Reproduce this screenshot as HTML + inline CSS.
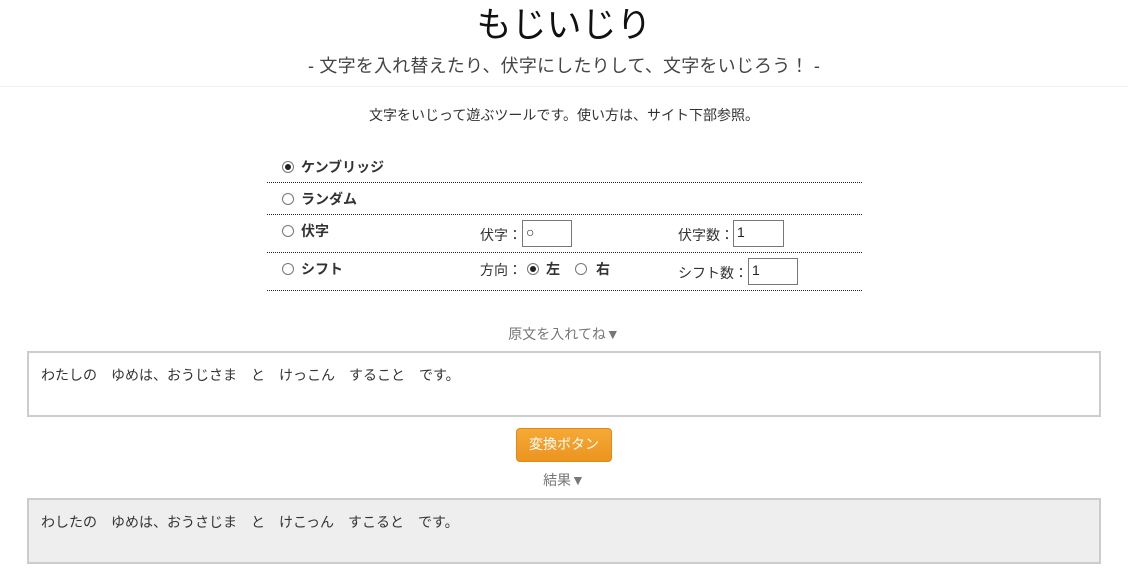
<!DOCTYPE html>
<html><head><meta charset="utf-8">
<style>
*{margin:0;padding:0;box-sizing:border-box}
body{width:1128px;height:575px;background:#fff;font-family:"Liberation Sans","Noto Sans CJK JP",sans-serif;color:#333;position:relative;overflow:hidden;font-size:13px}
.a{position:absolute;white-space:nowrap}
.c{left:0;width:1128px;text-align:center}
.r{position:absolute;width:12px;height:12px;border:1px solid #777;border-radius:50%;background:#fff}
.r.on::after{content:"";position:absolute;left:2px;top:2px;width:6px;height:6px;border-radius:50%;background:#222}
.hl{position:absolute;left:267px;width:595px;border-top:1px dotted #222;height:0}
.b{font-weight:bold;font-size:14px}
.in{position:absolute;border:1px solid #777;height:27px;background:#fff;font-size:14px;padding:3px 0 0 3px;color:#222}
.box{position:absolute;left:27px;width:1074px;height:66px;border:2px solid #ccc;padding:12px 12px;font-size:14px;color:#333}
</style></head><body>
<div class="a c" style="top:4px;font-size:35px;color:#111;line-height:44px">もじいじり</div>
<div class="a c" style="top:54px;font-size:18px;color:#444;line-height:24px;letter-spacing:0.2px">- 文字を入れ替えたり、伏字にしたりして、文字をいじろう！ -</div>
<div class="a" style="left:0;top:86px;width:1128px;border-top:1px solid #f0f0f0"></div>
<div class="a c" style="top:106px;font-size:14px;line-height:18px">文字をいじって遊ぶツールです。使い方は、サイト下部参照。</div>

<span class="r on" style="left:282px;top:161px"></span><div class="a b" style="left:301px;top:157px">ケンブリッジ</div>
<div class="hl" style="top:182px"></div>
<span class="r" style="left:282px;top:193px"></span><div class="a b" style="left:301px;top:189px">ランダム</div>
<div class="hl" style="top:214px"></div>
<span class="r" style="left:282px;top:225px"></span><div class="a b" style="left:301px;top:221px">伏字</div>
<div class="a" style="left:480px;top:225px;font-size:14px">伏字：</div><div class="in" style="left:522px;top:220px;width:50px">○</div>
<div class="a" style="left:678px;top:225px;font-size:14px">伏字数：</div><div class="in" style="left:733px;top:220px;width:51px">1</div>
<div class="hl" style="top:252px"></div>
<span class="r" style="left:282px;top:263px"></span><div class="a b" style="left:301px;top:259px">シフト</div>
<div class="a" style="left:480px;top:260px;font-size:14px">方向：</div>
<span class="r on" style="left:527px;top:263px"></span><div class="a b" style="left:546px;top:259px">左</div>
<span class="r" style="left:575px;top:263px"></span><div class="a b" style="left:596px;top:259px">右</div>
<div class="a" style="left:678px;top:263px;font-size:14px">シフト数：</div><div class="in" style="left:748px;top:258px;width:50px">1</div>
<div class="hl" style="top:290px"></div>

<div class="a c" style="top:324px;color:#777;font-size:14px">原文を入れてね▼</div>
<div class="box" style="top:351px;background:#fff">わたしの　ゆめは、おうじさま　と　けっこん　すること　です。</div>
<div class="a" style="left:516px;top:428px;width:96px;height:34px;border-radius:4px;background:linear-gradient(#f6a935,#ec9420);border:1px solid #e08a18;color:#fff;font-size:14px;text-align:center;line-height:31px">変換ボタン</div>
<div class="a c" style="top:470px;color:#777;font-size:14px">結果▼</div>
<div class="box" style="top:498px;background:#eee">わしたの　ゆめは、おうさじま　と　けこっん　すこると　です。</div>
</body></html>
